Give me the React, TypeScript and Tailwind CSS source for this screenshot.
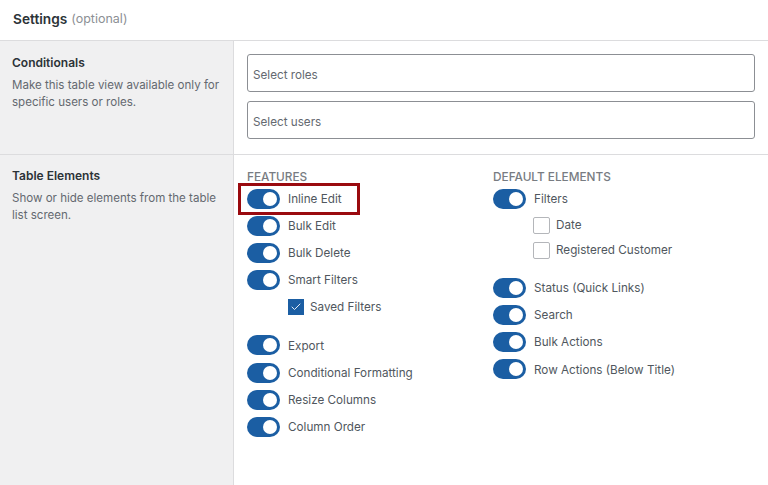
import { Check } from 'lucide-react';

function Toggle({ label }: { label: string }) {
  return (
    <div className="flex items-center h-[27.2px] gap-[8px]">
      <div className="w-[33px] h-[20px] rounded-full bg-[#1b5ea3] flex items-center justify-end pr-[3px] shrink-0">
        <div className="w-[14px] h-[14px] rounded-full bg-white" />
      </div>
      <span className="pt-[2px] text-[11.7px] text-[#50575e]">{label}</span>
    </div>
  );
}

function SubCheck({ label, checked }: { label: string; checked?: boolean }) {
  return (
    <div className="flex items-center h-[24px] mt-[1px] pl-[40px]">
      {checked ? (
        <div className="w-[16px] h-[16px] ml-[1px] mr-[6px] bg-[#1b5ea3] flex items-center justify-center shrink-0">
          <Check className="w-[12px] h-[12px] text-white" strokeWidth={1.75} />
        </div>
      ) : (
        <div className="w-[17px] h-[17px] mr-[6px] rounded-[2px] border border-[#b4b6ba] bg-white shrink-0" />
      )}
      <span className="pt-[2px] text-[11.7px] text-[#50575e]">{label}</span>
    </div>
  );
}

function SelectBox({ placeholder }: { placeholder: string }) {
  return (
    <div className="h-[38px] rounded-[3px] border border-[#8c8f94] bg-white flex items-center pl-[5px] pt-[6px] text-[11.7px] text-[#646970]">
      {placeholder}
    </div>
  );
}

export default function App() {
  return (
    <div className="w-[768px] h-[485px] overflow-hidden bg-white flex flex-col font-['Inter','Liberation_Sans',sans-serif]">
      <div className="h-[41px] shrink-0 border-b border-[#dcdcde] flex items-center pl-[13px] pb-[1px]">
        <span className="text-[13.7px] font-semibold text-[#2c3338]">Settings</span>
        <span className="text-[12.5px] text-[#8c8f94] ml-[4px]">(optional)</span>
      </div>

      {/* Conditionals */}
      <div className="h-[114px] shrink-0 flex border-b border-[#dcdcde]">
        <div className="w-[234px] shrink-0 bg-[#f0f0f1] border-r border-[#dcdcde] pl-[12px] pr-[2px] pt-[14px]">
          <div className="text-[12px] font-semibold leading-[16px] text-[#2c3338]">Conditionals</div>
          <p className="mt-[6px] text-[11.55px] leading-[17px] text-[#646970]">
            Make this table view available only for specific users or roles.
          </p>
        </div>
        <div className="flex-1 pl-[13px] pr-[13px] pt-[13px] flex flex-col gap-[9px]">
          <SelectBox placeholder="Select roles" />
          <SelectBox placeholder="Select users" />
        </div>
      </div>

      {/* Table Elements */}
      <div className="flex-1 flex">
        <div className="w-[234px] shrink-0 bg-[#f0f0f1] border-r border-[#dcdcde] pl-[12px] pr-[2px] pt-[13px]">
          <div className="text-[12px] font-semibold leading-[16px] text-[#2c3338]">Table Elements</div>
          <p className="mt-[6px] text-[11.55px] leading-[17px] text-[#646970]">
            Show or hide elements from the table list screen.
          </p>
        </div>
        <div className="relative flex-1 flex pl-[13px] pt-[14px]">
          <div className="w-[246px] shrink-0">
            <div className="text-[11.8px] font-medium leading-[16px] text-[#787c82]">FEATURES</div>
            <Toggle label="Inline Edit" />
            <Toggle label="Bulk Edit" />
            <Toggle label="Bulk Delete" />
            <Toggle label="Smart Filters" />
            <SubCheck label="Saved Filters" checked />
            <div className="h-[13px]" />
            <Toggle label="Export" />
            <Toggle label="Conditional Formatting" />
            <Toggle label="Resize Columns" />
            <Toggle label="Column Order" />
          </div>
          <div className="flex-1">
            <div className="text-[11.8px] font-medium leading-[16px] text-[#787c82]">DEFAULT ELEMENTS</div>
            <Toggle label="Filters" />
            <SubCheck label="Date" />
            <SubCheck label="Registered Customer" />
            <div className="h-[12px]" />
            <Toggle label="Status (Quick Links)" />
            <Toggle label="Search" />
            <Toggle label="Bulk Actions" />
            <Toggle label="Row Actions (Below Title)" />
          </div>
          {/* red highlight drawn over the first toggle */}
          <div className="absolute left-[4px] top-[28px] w-[122px] h-[32px] border-[3px] border-[#9a0a0f]" />
        </div>
      </div>
    </div>
  );
}
